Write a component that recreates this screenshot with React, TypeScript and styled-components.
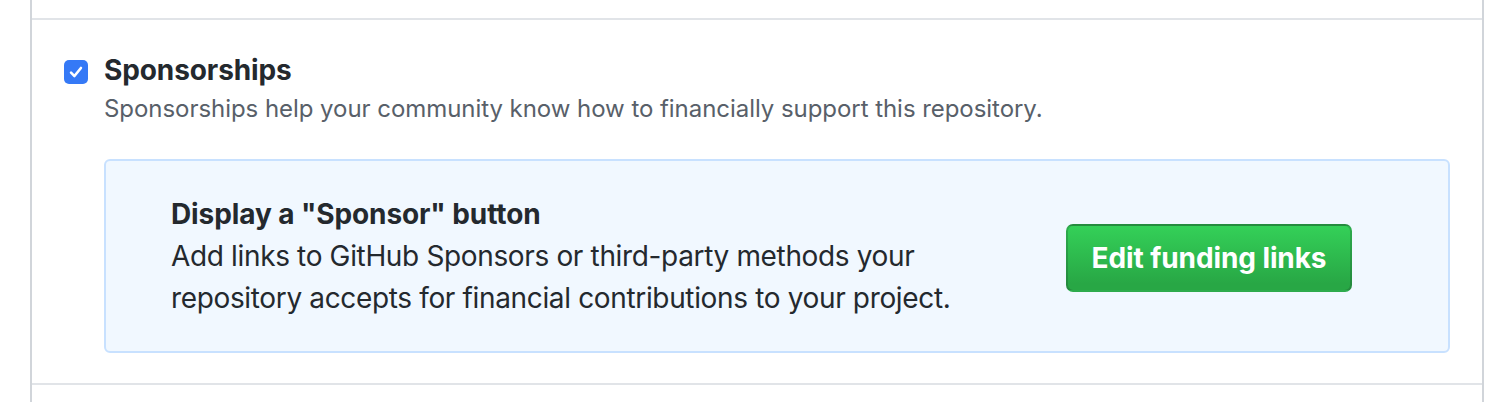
import React from "react";
import styled, { createGlobalStyle } from "styled-components";

const Global = createGlobalStyle`
  html, body { margin: 0; padding: 0; background: #ffffff; }
  body { font-family: Inter, "Noto Sans", sans-serif; color: #24292e; -webkit-font-smoothing: antialiased; }
`;

const Page = styled.div`
  width: 1504px;
  height: 402px;
  overflow: hidden;
  padding-left: 30px;
  box-sizing: border-box;
`;

const List = styled.div`
  width: 1454px;
  box-sizing: border-box;
  border-left: 2px solid #d1d5da;
  border-right: 2px solid #d1d5da;
  padding-top: 18px;
  height: 402px;
`;

const Item = styled.div`
  border-top: 2px solid #e1e4e8;
  border-bottom: 2px solid #e1e4e8;
  padding: 29px 32px 30px 32px;
  display: flex;
  gap: 16px;
`;

const Check = styled.span`
  flex: none;
  width: 24px;
  height: 24px;
  border-radius: 5px;
  background: #3579f6;
  display: flex;
  align-items: center;
  justify-content: center;
  margin-top: 11px;
`;

const Body = styled.div`
  flex: 1;
  display: flex;
  flex-direction: column;
`;

const Title = styled.div`
  font-size: 28px;
  font-weight: 700;
  line-height: 42px;
  letter-spacing: -0.1px;
  color: #24292e;
`;

const Desc = styled.div`
  font-size: 24px;
  line-height: 36px;
  letter-spacing: -0.05px;
  color: #586069;
`;

const Callout = styled.div`
  margin-top: 32px;
  box-sizing: border-box;
  width: 1346px;
  border: 2px solid #c8e1ff;
  border-radius: 6px;
  background: #f1f8ff;
  padding: 32px 96px 32px 65px;
  display: flex;
  align-items: center;
  justify-content: space-between;
`;

const CalloutText = styled.div`
  display: flex;
  flex-direction: column;
`;

const CalloutTitle = styled.div`
  font-size: 28px;
  font-weight: 700;
  line-height: 42px;
  letter-spacing: -0.1px;
  color: #24292e;
`;

const CalloutBody = styled.p`
  margin: 0;
  font-size: 28px;
  line-height: 42px;
  letter-spacing: -0.35px;
  color: #24292e;
`;

const Button = styled.button`
  font-family: inherit;
  font-size: 28px;
  font-weight: 700;
  letter-spacing: -0.1px;
  color: #ffffff;
  height: 68px;
  width: 286px;
  margin-top: 4px;
  border: 2px solid rgba(27, 31, 35, 0.2);
  border-radius: 7px;
  background: linear-gradient(-180deg, #34d058 0%, #28a745 90%);
  cursor: pointer;
  padding: 0;
`;

export default function App() {
  return (
    <>
      <Global />
      <Page>
        <List>
          <Item>
            <Check>
              <svg width="18" height="18" viewBox="0 0 16 16" fill="none">
                <path d="M3.6 8.6 L6.6 11.6 L12.4 4.4" stroke="#fff" strokeWidth="2.3" strokeLinecap="round" strokeLinejoin="round" />
              </svg>
            </Check>
            <Body>
              <Title>Sponsorships</Title>
              <Desc>Sponsorships help your community know how to financially support this repository.</Desc>
              <Callout>
                <CalloutText>
                  <CalloutTitle>Display a "Sponsor" button</CalloutTitle>
                  <CalloutBody>
                    Add links to GitHub Sponsors or third-party methods your
                    <br />
                    repository accepts for financial contributions to your project.
                  </CalloutBody>
                </CalloutText>
                <Button>Edit funding links</Button>
              </Callout>
            </Body>
          </Item>
        </List>
      </Page>
    </>
  );
}
